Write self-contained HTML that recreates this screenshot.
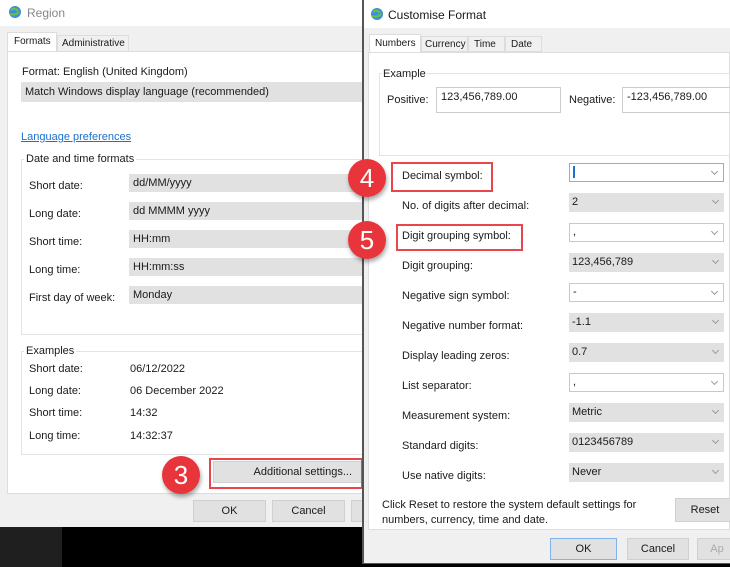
<!DOCTYPE html>
<html><head><style>
*{margin:0;padding:0;box-sizing:border-box}
body{width:730px;height:567px;overflow:hidden;background:#000;font-family:"Liberation Sans",sans-serif;font-size:11px;color:#1a1a1a;position:relative}
.a{position:absolute}
.win{background:#f0f0f0}
.fld{position:absolute;background:#e1e1e1;height:18px;padding:0 4px;line-height:18px;font-size:11px}
.cb{position:absolute;left:569px;width:155px;height:19px;background:#e1e1e1;padding:0 3px;line-height:18px}
.cb.w{background:#fff;border:1px solid #c8c8c8;line-height:16px}
.cb:after{content:"";position:absolute;right:6px;top:5px;width:4px;height:4px;border-right:1px solid #999;border-bottom:1px solid #999;transform:rotate(45deg)}
.lbl{position:absolute;font-size:11px}
.btn{position:absolute;background:#e1e1e1;border:1px solid #d0d0d0;text-align:center;font-size:11px;line-height:20px;height:22px}
.circ{position:absolute;width:38px;height:38px;border-radius:50%;background:#e8353b;color:#fff;font-size:26px;text-align:center;line-height:38px;box-shadow:1px 3px 4px rgba(0,0,0,.35)}
.rb{position:absolute;border:2px solid #e8464b}
.grp{position:absolute;border:1px solid #e3e3e3}
</style></head><body>
<div class="a" style="left:0;top:527px;width:62px;height:40px;background:#1f1f1f"></div>
<div class="a win" style="left:0;top:0;width:362px;height:527px"></div>
<div class="a" style="left:0;top:0;width:362px;height:26px;background:#fff"></div>
<svg class="a" style="left:7px;top:4px" width="16" height="16"><circle cx="8" cy="8" r="6" fill="#3d8fd6"/><path d="M4 6q4-3 7 1M3 10q5 2 9-2" stroke="#6cbf4a" stroke-width="2" fill="none"/></svg>
<div class="a" style="left:27px;top:6px;font-size:12px;color:#888">Region</div>
<div class="a" style="left:7px;top:32px;width:50px;height:20px;background:#fff;border:1px solid #ddd;border-bottom:none;padding:3px 6px;font-size:10px">Formats</div>
<div class="a" style="left:57px;top:35px;width:72px;height:17px;background:#f0f0f0;border:1px solid #ddd;padding:2px 4px;font-size:10px">Administrative</div>
<div class="a" style="left:7px;top:51px;width:360px;height:443px;background:#fff;border:1px solid #ddd"></div>
<div class="lbl" style="left:22px;top:66px">Format: English (United Kingdom)</div>
<div class="fld" style="left:21px;top:82px;width:345px;height:20px;line-height:20px">Match Windows display language (recommended)</div>
<div class="lbl" style="left:21px;top:131px;color:#1e6fce;text-decoration:underline">Language preferences</div>
<div class="grp" style="left:21px;top:159px;width:350px;height:176px"></div>
<div class="lbl" style="left:24px;top:153px;background:#fff;padding:0 2px">Date and time formats</div>
<div class="lbl" style="left:29px;top:180px">Short date:</div><div class="fld" style="left:129px;top:174px;width:240px">dd/MM/yyyy</div>
<div class="lbl" style="left:29px;top:208px">Long date:</div><div class="fld" style="left:129px;top:202px;width:240px">dd MMMM yyyy</div>
<div class="lbl" style="left:29px;top:236px">Short time:</div><div class="fld" style="left:129px;top:230px;width:240px">HH:mm</div>
<div class="lbl" style="left:29px;top:264px">Long time:</div><div class="fld" style="left:129px;top:258px;width:240px">HH:mm:ss</div>
<div class="lbl" style="left:29px;top:292px">First day of week:</div><div class="fld" style="left:129px;top:286px;width:240px">Monday</div>
<div class="grp" style="left:21px;top:351px;width:350px;height:104px"></div>
<div class="lbl" style="left:24px;top:345px;background:#fff;padding:0 2px">Examples</div>
<div class="lbl" style="left:29px;top:363px">Short date:</div><div class="lbl" style="left:130px;top:363px">06/12/2022</div>
<div class="lbl" style="left:29px;top:385px">Long date:</div><div class="lbl" style="left:130px;top:385px">06 December 2022</div>
<div class="lbl" style="left:29px;top:407px">Short time:</div><div class="lbl" style="left:130px;top:407px">14:32</div>
<div class="lbl" style="left:29px;top:430px">Long time:</div><div class="lbl" style="left:130px;top:430px">14:32:37</div>
<div class="btn" style="left:213px;top:461px;width:150px;text-align:right;padding-right:10px">Additional settings...</div>
<div class="rb" style="left:209px;top:458px;width:154px;height:31px"></div>
<div class="circ" style="left:162px;top:456px">3</div>
<div class="btn" style="left:193px;top:500px;width:73px">OK</div>
<div class="btn" style="left:272px;top:500px;width:73px">Cancel</div>
<div class="btn" style="left:351px;top:500px;width:20px"></div>
<div class="a win" style="left:362px;top:0;width:368px;height:564px;border-left:2px solid #555;border-bottom:1px solid #555"></div>
<div class="a" style="left:364px;top:0;width:366px;height:28px;background:#fff"></div>
<svg class="a" style="left:369px;top:6px" width="16" height="16"><circle cx="8" cy="8" r="6" fill="#3d8fd6"/><path d="M4 6q4-3 7 1M3 10q5 2 9-2" stroke="#6cbf4a" stroke-width="2" fill="none"/></svg>
<div class="a" style="left:388px;top:8px;font-size:12px">Customise Format</div>
<div class="a" style="left:369px;top:34px;width:52px;height:19px;background:#fff;border:1px solid #ddd;border-bottom:none;padding:3px 5px;font-size:10px">Numbers</div>
<div class="a" style="left:421px;top:36px;width:47px;height:16px;border:1px solid #ddd;padding:2px 3px;font-size:10px">Currency</div>
<div class="a" style="left:468px;top:36px;width:37px;height:16px;border:1px solid #ddd;padding:2px 5px;font-size:10px">Time</div>
<div class="a" style="left:505px;top:36px;width:37px;height:16px;border:1px solid #ddd;padding:2px 5px;font-size:10px">Date</div>
<div class="a" style="left:368px;top:52px;width:362px;height:478px;background:#fff;border:1px solid #ddd"></div>
<div class="grp" style="left:379px;top:73px;width:351px;height:83px"></div>
<div class="lbl" style="left:382px;top:68px;background:#fff;padding:0 1px">Example</div>
<div class="lbl" style="left:387px;top:94px">Positive:</div>
<div class="a" style="left:436px;top:87px;width:125px;height:26px;border:1px solid #ccc;padding:3px 4px">123,456,789.00</div>
<div class="lbl" style="left:569px;top:94px">Negative:</div>
<div class="a" style="left:622px;top:87px;width:110px;height:26px;border:1px solid #ccc;padding:3px 4px">-123,456,789.00</div>
<div class="lbl" style="left:402px;top:170px">Decimal symbol:</div>
<div class="cb w" style="top:163px;border-color:#7eb4ea"><span style="display:inline-block;width:2px;height:12px;background:#1e6fce;vertical-align:middle"></span></div>
<div class="lbl" style="left:402px;top:200px">No. of digits after decimal:</div><div class="cb" style="top:193px">2</div>
<div class="lbl" style="left:402px;top:230px">Digit grouping symbol:</div><div class="cb w" style="top:223px">,</div>
<div class="lbl" style="left:402px;top:260px">Digit grouping:</div><div class="cb" style="top:253px">123,456,789</div>
<div class="lbl" style="left:402px;top:290px">Negative sign symbol:</div><div class="cb w" style="top:283px">-</div>
<div class="lbl" style="left:402px;top:320px">Negative number format:</div><div class="cb" style="top:313px">-1.1</div>
<div class="lbl" style="left:402px;top:350px">Display leading zeros:</div><div class="cb" style="top:343px">0.7</div>
<div class="lbl" style="left:402px;top:380px">List separator:</div><div class="cb w" style="top:373px">,</div>
<div class="lbl" style="left:402px;top:410px">Measurement system:</div><div class="cb" style="top:403px">Metric</div>
<div class="lbl" style="left:402px;top:440px">Standard digits:</div><div class="cb" style="top:433px">0123456789</div>
<div class="lbl" style="left:402px;top:470px">Use native digits:</div><div class="cb" style="top:463px">Never</div>
<div class="lbl" style="left:382px;top:498px;line-height:15px">Click Reset to restore the system default settings for<br>numbers, currency, time and date.</div>
<div class="btn" style="left:675px;top:498px;width:60px;height:24px;line-height:22px">Reset</div>
<div class="btn" style="left:550px;top:538px;width:67px;border-color:#7eb4ea">OK</div>
<div class="btn" style="left:627px;top:538px;width:62px">Cancel</div>
<div class="btn" style="left:697px;top:538px;width:40px;color:#aaa">Ap</div>
<div class="rb" style="left:391px;top:162px;width:102px;height:30px"></div>
<div class="rb" style="left:396px;top:224px;width:127px;height:27px"></div>
<div class="circ" style="left:348px;top:159px">4</div>
<div class="circ" style="left:348px;top:221px">5</div>
</body></html>
